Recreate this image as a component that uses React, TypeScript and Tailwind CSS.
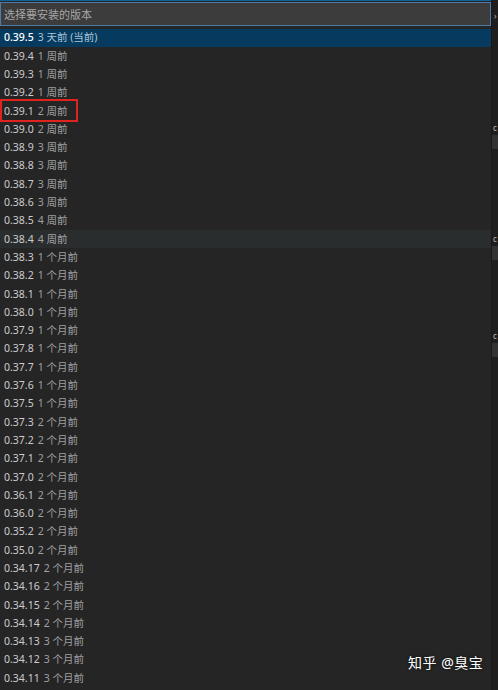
import React from 'react';

const versions: [string, string][] = [
  ['0.39.5', '3 天前 (当前)'],
  ['0.39.4', '1 周前'],
  ['0.39.3', '1 周前'],
  ['0.39.2', '1 周前'],
  ['0.39.1', '2 周前'],
  ['0.39.0', '2 周前'],
  ['0.38.9', '3 周前'],
  ['0.38.8', '3 周前'],
  ['0.38.7', '3 周前'],
  ['0.38.6', '3 周前'],
  ['0.38.5', '4 周前'],
  ['0.38.4', '4 周前'],
  ['0.38.3', '1 个月前'],
  ['0.38.2', '1 个月前'],
  ['0.38.1', '1 个月前'],
  ['0.38.0', '1 个月前'],
  ['0.37.9', '1 个月前'],
  ['0.37.8', '1 个月前'],
  ['0.37.7', '1 个月前'],
  ['0.37.6', '1 个月前'],
  ['0.37.5', '1 个月前'],
  ['0.37.3', '2 个月前'],
  ['0.37.2', '2 个月前'],
  ['0.37.1', '2 个月前'],
  ['0.37.0', '2 个月前'],
  ['0.36.1', '2 个月前'],
  ['0.36.0', '2 个月前'],
  ['0.35.2', '2 个月前'],
  ['0.35.0', '2 个月前'],
  ['0.34.17', '2 个月前'],
  ['0.34.16', '2 个月前'],
  ['0.34.15', '2 个月前'],
  ['0.34.14', '2 个月前'],
  ['0.34.13', '3 个月前'],
  ['0.34.12', '3 个月前'],
  ['0.34.11', '3 个月前'],
];

const Row: React.FC<{ label: string; desc: string; index: number }> = ({ label, desc, index }) => {
  const selected = index === 0;
  const hovered = index === 11;
  const marked = index === 4;
  let rowCls = 'relative flex items-center h-[18.3px] pl-[4px] whitespace-nowrap';
  if (selected) rowCls += ' bg-[#063b5f]';
  else if (hovered) rowCls += ' bg-[#2a2d2e]';
  return (
    <div className={rowCls}>
      <span className={selected ? 'text-white font-medium' : 'text-[#cccccc]'}>{label}</span>
      <span className={`ml-[4px] ${selected ? 'text-[#a9c4d8]' : 'text-[#a0a0a0]'}`}>{desc}</span>
      {marked && (
        <div className="absolute left-0 top-[-3px] w-[78px] h-[23px] border-2 border-[#e0231d]" />
      )}
    </div>
  );
};

export default function App() {
  return (
    <div
      className="w-[498px] h-[690px] overflow-hidden flex bg-[#1e1e1e] text-[10.5px] leading-none"
      style={{ fontFamily: '"Noto Sans", "Noto Sans CJK SC", sans-serif' }}
    >
      <div className="w-[491px] flex flex-col bg-[#252526] relative">
        <div className="h-[1px] bg-[#0e639c]" />
        <div className="pt-[1px] pb-[2px]">
          <div className="h-[24px] bg-[#3c3c3c] border border-[#4e7ba8] flex items-center pl-[3px] text-[#a6a6a6] text-[11px]">
            选择要安装的版本
          </div>
        </div>
        <div className="flex flex-col pt-[0.5px]">
          {versions.map(([v, d], i) => (
            <Row key={v} label={v} desc={d} index={i} />
          ))}
        </div>
        <div
          className="absolute left-[408px] top-[656px] text-white text-[14px] leading-none tracking-[0.5px]"
          style={{ textShadow: '0 0 3px rgba(0,0,0,0.8)' }}
        >
          知乎 @臭宝
        </div>
      </div>
      <div className="flex-1 flex flex-col text-[#bbbbbb] text-[8px] border-l border-[#181818]">
        <div className="h-[12px]" />
        <div className="pl-[2px]">›</div>
        <div className="h-[104px]" />
        <div className="pl-[1px]">c</div>
        <div className="h-[14px] mt-[3px] bg-[#333333]" />
        <div className="h-[86px]" />
        <div className="pl-[1px]">c</div>
        <div className="h-[14px] mt-[3px] bg-[#333333]" />
        <div className="h-[72px]" />
        <div className="pl-[1px]">c</div>
        <div className="h-[14px] mt-[3px] bg-[#333333]" />
      </div>
    </div>
  );
}
